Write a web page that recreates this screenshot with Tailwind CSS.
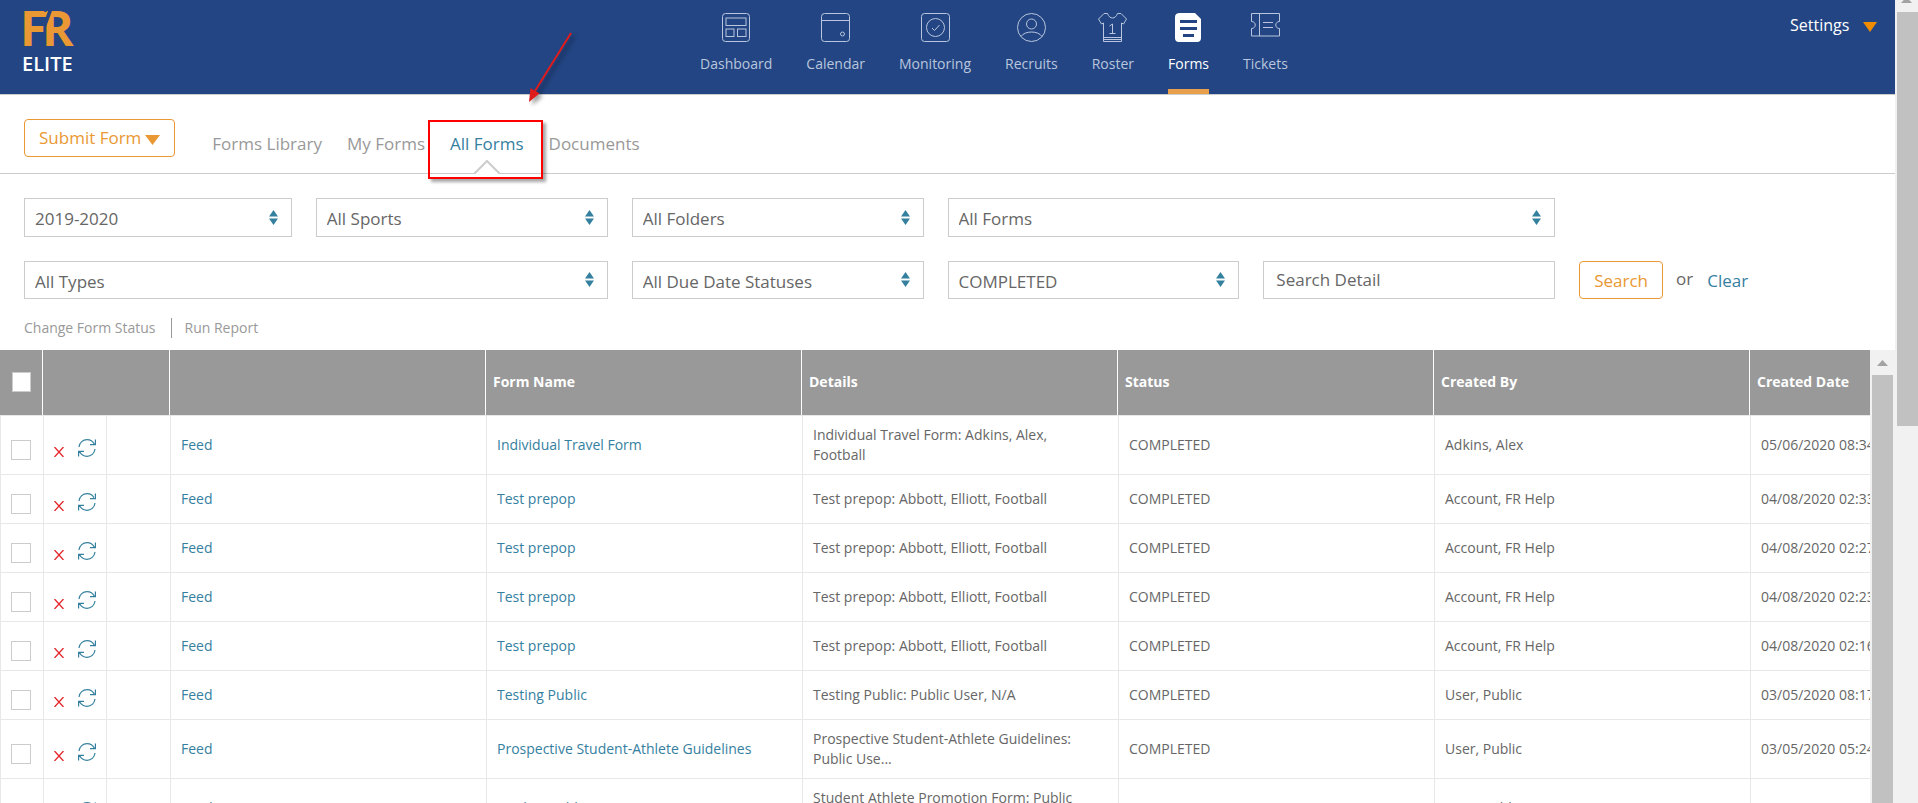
<!DOCTYPE html>
<html lang="en">
<head>
  <meta charset="UTF-8">
  <title>FR Elite - All Forms</title>
  <script src="https://cdn.jsdelivr.net/npm/@tailwindcss/browser@4"></script>
</head>
<body class="h-screen overflow-hidden flex bg-white text-[#666] font-['Open_Sans','Noto_Sans',sans-serif]">
<div class="flex-1 min-w-0 flex flex-col">
  <header class="h-[95px] shrink-0 flex bg-[#234583] border-b border-[#ccc]">
    <a href="#" class="w-[198px] pl-6 pt-2" aria-label="FR Elite">
      <svg class="w-[54px] h-16 overflow-visible" viewBox="24 8 54 64" font-family="Open Sans" fill="#e99833">
        <text x="20" y="46" font-size="48" font-weight="700">F</text>
        <path d="M43 12h5l-2 5h-3z"/>
        <text x="42" y="46" font-size="48" font-weight="700">R</text>
        <path d="M48 11h4l-6 16v-10z" fill="#234583"/>
        <text x="22" y="71" font-size="20" font-weight="600" fill="#fff">ELITE</text>
      </svg>
    </a>
    <nav class="flex-1 flex justify-center gap-[34px] text-sm font-medium text-[#b9c6de]">
      <a href="#" class="flex flex-col items-center gap-3 pt-[13px] border-b-5 border-transparent">
        <svg class="size-[29px]" viewBox="0 0 29 29" fill="none" stroke="currentColor"><rect x=".5" y=".5" width="27" height="28" rx="3"/><rect x="4" y="5" width="20" height="7.5"/><rect x="4" y="16" width="8" height="7.500"/><rect x="15.500" y="16" width="8.500" height="7.500"/></svg>
        Dashboard
      </a>
      <a href="#" class="flex flex-col items-center gap-3 pt-[13px] border-b-5 border-transparent">
        <svg class="size-[29px]" viewBox="0 0 29 29" fill="none" stroke="currentColor"><rect x=".5" y=".5" width="28" height="28" rx="3"/><path d="M.5 7.500h28"/><circle cx="21.500" cy="21" r="2"/></svg>
        Calendar
      </a>
      <a href="#" class="flex flex-col items-center gap-3 pt-[13px] border-b-5 border-transparent">
        <svg class="size-[29px]" viewBox="0 0 29 29" fill="none" stroke="currentColor"><rect x=".5" y=".5" width="28" height="28" rx="3"/><circle cx="14.500" cy="14.500" r="9"/><path d="M11 15l2.500 2.500 5-5.500"/></svg>
        Monitoring
      </a>
      <a href="#" class="flex flex-col items-center gap-3 pt-[13px] border-b-5 border-transparent">
        <svg class="size-[29px]" viewBox="0 0 29 29" fill="none" stroke="currentColor"><circle cx="14.500" cy="14.500" r="14"/><circle cx="14.500" cy="11" r="5"/><path d="M4 23.500c2-3 6-4.500 10.500-4.500s8.500 1.500 10.500 4.500"/></svg>
        Recruits
      </a>
      <a href="#" class="flex flex-col items-center gap-3 pt-[13px] border-b-5 border-transparent">
        <svg class="size-[29px]" viewBox="0 0 29 29" fill="none" stroke="currentColor"><path d="M5.500 28.500V10L3.500 11 .5 6 6 .5h3.500c1 3 3 4.500 5 4.500s4-1.500 5-4.500H23L28.500 6l-3 5-2-1v18.500zM5.500 24.500h18M5.500 26.500h18M11.500 13l3-2v9.500M11.500 20.500h6"/></svg>
        Roster
      </a>
      <a href="#" class="flex flex-col items-center gap-3 pt-[13px] border-b-5 border-[#e9a04c] text-white">
        <svg class="size-[29px]" viewBox="0 0 29 29" fill="currentColor"><path d="M6 0h15l6 6v19q0 4-4 4H5q-4 0-4-4V4q0-4 5-4z"/><path d="M6 8.500h17M6 15.500h17M9 22.500h11" stroke="#234583" stroke-width="3"/></svg>
        Forms
      </a>
      <a href="#" class="flex flex-col items-center gap-3 pt-[13px] border-b-5 border-transparent">
        <svg class="size-[29px]" viewBox="0 0 29 29" fill="none" stroke="currentColor"><path d="M.5 .5h28v8c-5 0-5 7 0 7v7.500H.5v-7.500c5 0 5-7 0-7zM8.500 .5V23M12 9.500h10M12 14.500h10"/></svg>
        Tickets
      </a>
    </nav>
    <div class="w-[105px]">
      <button class="flex items-center gap-[14px] mt-[13px] leading-6 font-medium text-white">
        Settings
        <svg class="w-[14px] h-[10px] mt-1" viewBox="0 0 14 10" fill="#f08c00"><path d="M0 0h14L7 10z"/></svg>
      </button>
    </div>
  </header>

  <div class="h-[79px] shrink-0 flex items-start pl-6 border-b border-[#ccc] text-[17px] text-[#999]">
    <button class="flex items-center gap-1 h-[38px] mt-6 px-[14px] border border-[#e99833] rounded text-[#e99833]">
      Submit Form
      <svg class="w-[15px] h-[10px] mt-1" viewBox="0 0 15 10" fill="#e99833"><path d="M0 0h15L7.500 10z"/></svg>
    </button>
    <ul class="flex gap-[25px] ml-[37px] h-full leading-6">
      <li class="pt-[37px]"><a href="#">Forms Library</a></li>
      <li class="pt-[37px]"><a href="#">My Forms</a></li>
      <li class="relative pt-[37px] text-[#35809f]">
        <a href="#">All Forms</a>
        <svg class="absolute left-1/2 -translate-x-1/2 -bottom-px w-[28px] h-[14px]" viewBox="0 0 28 14" fill="#fff" stroke="#ccc" stroke-width="2"><path d="M1 14L14 1l13 13"/></svg>
        <!-- highlight and arrow -->
        <div class="absolute -left-[22px] top-[25px] w-[115px] h-[59px] border-2 border-[#f00] shadow-[3px_3px_3px_rgba(0,0,0,0.35)]"></div>
        <svg class="absolute left-[74px] -top-[66px] w-[54px] h-20 drop-shadow-[3px_3px_2px_rgba(0,0,0,0.4)]" viewBox="0 0 54 80" fill="#e01b1b"><path d="M47 4L11 62" stroke="#e01b1b" stroke-width="2"/><path d="M5 73l1.500-14 9 5.500z"/></svg>
      </li>
      <li class="pt-[37px]"><a href="#">Documents</a></li>
    </ul>
  </div>

  <form class="shrink-0 grid grid-cols-6 gap-y-6 pt-6 text-[17px]" onsubmit="return false">
    <div class="relative pl-6 pr-6">
      <select aria-label="Year" class="appearance-none w-full h-[39px] px-[10px] pt-[2px] border border-[#ccc]"><option>2019-2020</option></select>
      <svg class="absolute right-[38px] top-3 w-[9px] h-[15px] pointer-events-none" viewBox="0 0 9 15" fill="#35809f"><path d="M0 6.500L4.500 0 9 6.500zM0 8.500h9L4.500 15z"/></svg>
    </div>
    <div class="relative pr-6">
      <select aria-label="Sport" class="appearance-none w-full h-[39px] px-[10px] pt-[2px] border border-[#ccc]"><option>All Sports</option></select>
      <svg class="absolute right-[38px] top-3 w-[9px] h-[15px] pointer-events-none" viewBox="0 0 9 15" fill="#35809f"><path d="M0 6.500L4.500 0 9 6.500zM0 8.500h9L4.500 15z"/></svg>
    </div>
    <div class="relative pr-6">
      <select aria-label="Folder" class="appearance-none w-full h-[39px] px-[10px] pt-[2px] border border-[#ccc]"><option>All Folders</option></select>
      <svg class="absolute right-[38px] top-3 w-[9px] h-[15px] pointer-events-none" viewBox="0 0 9 15" fill="#35809f"><path d="M0 6.500L4.500 0 9 6.500zM0 8.500h9L4.500 15z"/></svg>
    </div>
    <div class="relative pr-6 col-span-2">
      <select aria-label="Form" class="appearance-none w-full h-[39px] px-[10px] pt-[2px] border border-[#ccc]"><option>All Forms</option></select>
      <svg class="absolute right-[38px] top-3 w-[9px] h-[15px] pointer-events-none" viewBox="0 0 9 15" fill="#35809f"><path d="M0 6.500L4.500 0 9 6.500zM0 8.500h9L4.500 15z"/></svg>
    </div>
    <div class="relative pl-6 pr-6 col-span-2 col-start-1">
      <select aria-label="Type" class="appearance-none w-full h-[38px] px-[10px] pt-[3px] border border-[#ccc]"><option>All Types</option></select>
      <svg class="absolute right-[38px] top-[11px] w-[9px] h-[15px] pointer-events-none" viewBox="0 0 9 15" fill="#35809f"><path d="M0 6.500L4.500 0 9 6.500zM0 8.500h9L4.500 15z"/></svg>
    </div>
    <div class="relative pr-6">
      <select aria-label="Due date status" class="appearance-none w-full h-[38px] px-[10px] pt-[3px] border border-[#ccc]"><option>All Due Date Statuses</option></select>
      <svg class="absolute right-[38px] top-[11px] w-[9px] h-[15px] pointer-events-none" viewBox="0 0 9 15" fill="#35809f"><path d="M0 6.500L4.500 0 9 6.500zM0 8.500h9L4.500 15z"/></svg>
    </div>
    <div class="relative pr-6">
      <select aria-label="Status" class="appearance-none w-full h-[38px] px-[10px] pt-[3px] border border-[#ccc]"><option>COMPLETED</option></select>
      <svg class="absolute right-[38px] top-[11px] w-[9px] h-[15px] pointer-events-none" viewBox="0 0 9 15" fill="#35809f"><path d="M0 6.500L4.500 0 9 6.500zM0 8.500h9L4.500 15z"/></svg>
    </div>
    <div class="pr-6">
      <input type="text" aria-label="Search detail" placeholder="Search Detail" class="w-full h-[38px] px-3 pb-[2px] border border-[#ccc] placeholder:text-[#666]">
    </div>
    <div class="flex items-center">
      <button class="h-[38px] px-[14px] pt-[2px] border border-[#e99833] rounded text-[#e99833]">Search</button>
      <span class="ml-[13px] pb-[2px]">or</span>
      <a href="#" class="ml-[14px] pt-[2px] text-[#35809f]">Clear</a>
    </div>
  </form>

  <div class="shrink-0 flex items-center h-[51px] pt-[7px] pl-6 text-sm text-[#999]">
    <a href="#" class="pr-[15px] border-r border-[#999]">Change Form Status</a>
    <a href="#" class="pl-[13px]">Run Report</a>
  </div>

  <div class="flex-1 min-h-0 flex">
    <div class="flex-1 min-w-0 overflow-hidden">
      <table class="table-fixed border-separate border-spacing-0 w-[2066px] text-sm text-left">
        <colgroup>
          <col class="w-[43px]"><col class="w-[63px]"><col class="w-[64px]"><col class="w-[316px]"><col class="w-[316px]"><col class="w-[316px]"><col class="w-[316px]"><col class="w-[316px]"><col class="w-[316px]">
        </colgroup>
        <thead>
          <tr class="h-[65px] bg-[#999] text-white [&>th]:pb-[2px]">
            <th class="pl-3 border-r"><input type="checkbox" aria-label="Select all" class="block appearance-none w-[19px] h-5 bg-white border border-[#ccc]"></th>
            <th colspan="2" class="border-r"></th>
            <th class="border-r"></th>
            <th class="px-[7px] border-r">Form Name</th>
            <th class="px-[7px] border-r">Details</th>
            <th class="px-[7px] border-r">Status</th>
            <th class="px-[7px] border-r">Created By</th>
            <th class="px-[7px]">Created Date</th>
          </tr>
        </thead>
        <tbody id="rows"></tbody>
      </table>
    </div>
    <div class="w-[25px] bg-[#f1f1f1] flex flex-col items-center pt-[10px] gap-[9px]">
      <svg class="w-[11px] h-[6px] shrink-0" viewBox="0 0 11 6" fill="#a3a3a3"><path d="M0 6L5.500 0 11 6z"/></svg>
      <div class="w-[21px] flex-1 bg-[#c1c1c1]"></div>
    </div>
  </div>
</div>
<div class="w-[23px] shrink-0 bg-[#f1f1f1] flex flex-col items-center gap-[9px]">
  <svg class="w-[11px] h-[3px] shrink-0" viewBox="0 3 11 3" fill="#a3a3a3"><path d="M0 6L5.500 0 11 6z"/></svg>
  <div class="w-[21px] h-[414px] self-end bg-[#c1c1c1]"></div>
</div>
<script>
  const forms = [
    ['Individual Travel Form', 'Individual Travel Form: Adkins, Alex, Football', 'Adkins, Alex', '05/06/2020 08:34 PM'],
    ['Test prepop', 'Test prepop: Abbott, Elliott, Football', 'Account, FR Help', '04/08/2020 02:33 PM'],
    ['Test prepop', 'Test prepop: Abbott, Elliott, Football', 'Account, FR Help', '04/08/2020 02:27 PM'],
    ['Test prepop', 'Test prepop: Abbott, Elliott, Football', 'Account, FR Help', '04/08/2020 02:23 PM'],
    ['Test prepop', 'Test prepop: Abbott, Elliott, Football', 'Account, FR Help', '04/08/2020 02:16 PM'],
    ['Testing Public', 'Testing Public: Public User, N/A', 'User, Public', '03/05/2020 08:17 PM'],
    ['Prospective Student-Athlete Guidelines', 'Prospective Student-Athlete Guidelines: Public Use...', 'User, Public', '03/05/2020 05:24 PM'],
    ['Student Athlete Promotion Form', 'Student Athlete Promotion Form: Public User, N/A', 'User, Public', '03/05/2020 05:20 PM'],
  ];
  document.getElementById('rows').innerHTML = forms.map(([name, details, author, date]) => `
    <tr class="h-[49px] [&>td]:border-t [&>td]:border-l [&>td]:border-[#e8e8e8]">
      <td class="pl-[10px] pt-[10px]"><input type="checkbox" aria-label="Select ${name}" class="block appearance-none size-5 border border-[#ccc]"></td>
      <td class="pl-[10px]">
        <div class="flex items-center gap-[14px] pt-[6px]">
          <button aria-label="Delete" class="pt-[7px]"><svg class="size-[10px]" viewBox="0 0 10 10" fill="none" stroke="#e3262b" stroke-width="1.300"><path d="M.5 0l9 10M9.500 0l-9 10"/></svg></button>
          <button aria-label="Change status"><svg class="size-[18px]" viewBox="0 0 18 18" fill="none" stroke="#35809f" stroke-width="1.200"><path d="M1 8C1.500 3.500 5 .7 9 .7c3.500 0 6 1.800 7.500 4.800M17.400 .5v5.200h-5.400M17 10c-.5 4.500-4 7.300-8 7.300-3.500 0-6-1.800-7.500-4.800M.6 17.500v-5.200H6"/></svg></button>
        </div>
      </td>
      <td></td>
      <td class="px-[10px]"><a href="#" class="text-[#35809f]">Feed</a></td>
      <td class="px-[10px]"><a href="#" class="text-[#35809f]">${name}</a></td>
      <td class="pl-[10px] pr-7 py-[9px]">${details}</td>
      <td class="px-[10px]">COMPLETED</td>
      <td class="px-[10px]">${author}</td>
      <td class="px-[10px]">${date}</td>
    </tr>`).join('');
</script>
</body>
</html>
